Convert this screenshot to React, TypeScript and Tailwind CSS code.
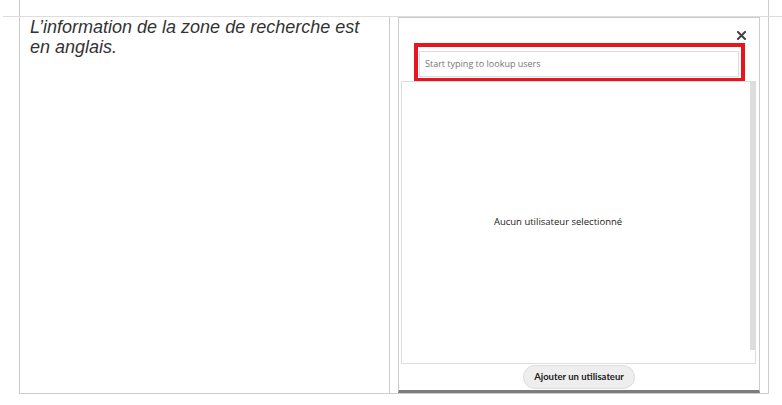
import React from 'react';

function CloseIcon() {
  return (
    <svg width="9" height="9" viewBox="0 0 9 9" className="block">
      <path d="M1 1 L8 8 M8 1 L1 8" stroke="#444" strokeWidth="2" strokeLinecap="square" />
    </svg>
  );
}

function UserLookupDialog() {
  return (
    <div className="w-[362px] h-[376px] flex flex-col border border-[#cccccc] border-b-[3px] border-b-[#7c7c7c] bg-white">
      {/* header */}
      <div className="h-[25px] flex items-start justify-end pt-[13px] pr-[13px]">
        <CloseIcon />
      </div>
      {/* highlighted search field */}
      <div className="ml-[15px] mr-[14px] h-[39px] border-4 border-[#e8141e] pt-[4px] pl-[1px] pr-[2px] pb-[1px]">
        <div className="h-[26px] border border-[#dddddd] flex items-center pl-[5px] text-[9px] text-[#777] font-['Open_Sans',sans-serif]">
          Start typing to lookup users
        </div>
      </div>
      {/* selected users list */}
      <div className="ml-[2px] mr-[3px] mt-[-1px] h-[283px] border border-[#dddddd] flex">
        <div className="flex-1 flex items-center justify-center pr-[36px] text-[9.5px] text-[#222] font-['Open_Sans',sans-serif]">
          Aucun utilisateur selectionné
        </div>
        <div className="w-[5px] h-[268px] bg-[#dddddd]" />
      </div>
      <div className="mt-[1px] flex justify-center">
        <button
          type="button"
          className="h-[24px] w-[112px] rounded-full bg-[#eeeeee] border border-[#dddddd] text-[9.5px] font-bold text-[#222] font-['Lato',sans-serif]"
        >
          Ajouter un utilisateur
        </button>
      </div>
    </div>
  );
}

export default function App() {
  return (
    <div className="w-[782px] h-[405px] bg-white flex flex-col">
      {/* end of the previous row */}
      <div className="ml-[19px] w-[750px] h-[16px] border-x border-[#cccccc]" />
      <div className="ml-[3px] h-px bg-[#dddddd]" />
      {/* row */}
      <div className="ml-[19px] w-[750px] h-[377px] flex border-x border-b border-[#cccccc]">
        <div className="w-[370px] border-r border-[#cccccc] pl-[10px] pr-[10px] text-[18px] leading-[20px] italic text-[#333] font-['Liberation_Sans',Arial,sans-serif]">
          L’information de la zone de recherche est en anglais.
        </div>
        <div className="flex-1 pl-[8px]">
          <UserLookupDialog />
        </div>
      </div>
    </div>
  );
}
